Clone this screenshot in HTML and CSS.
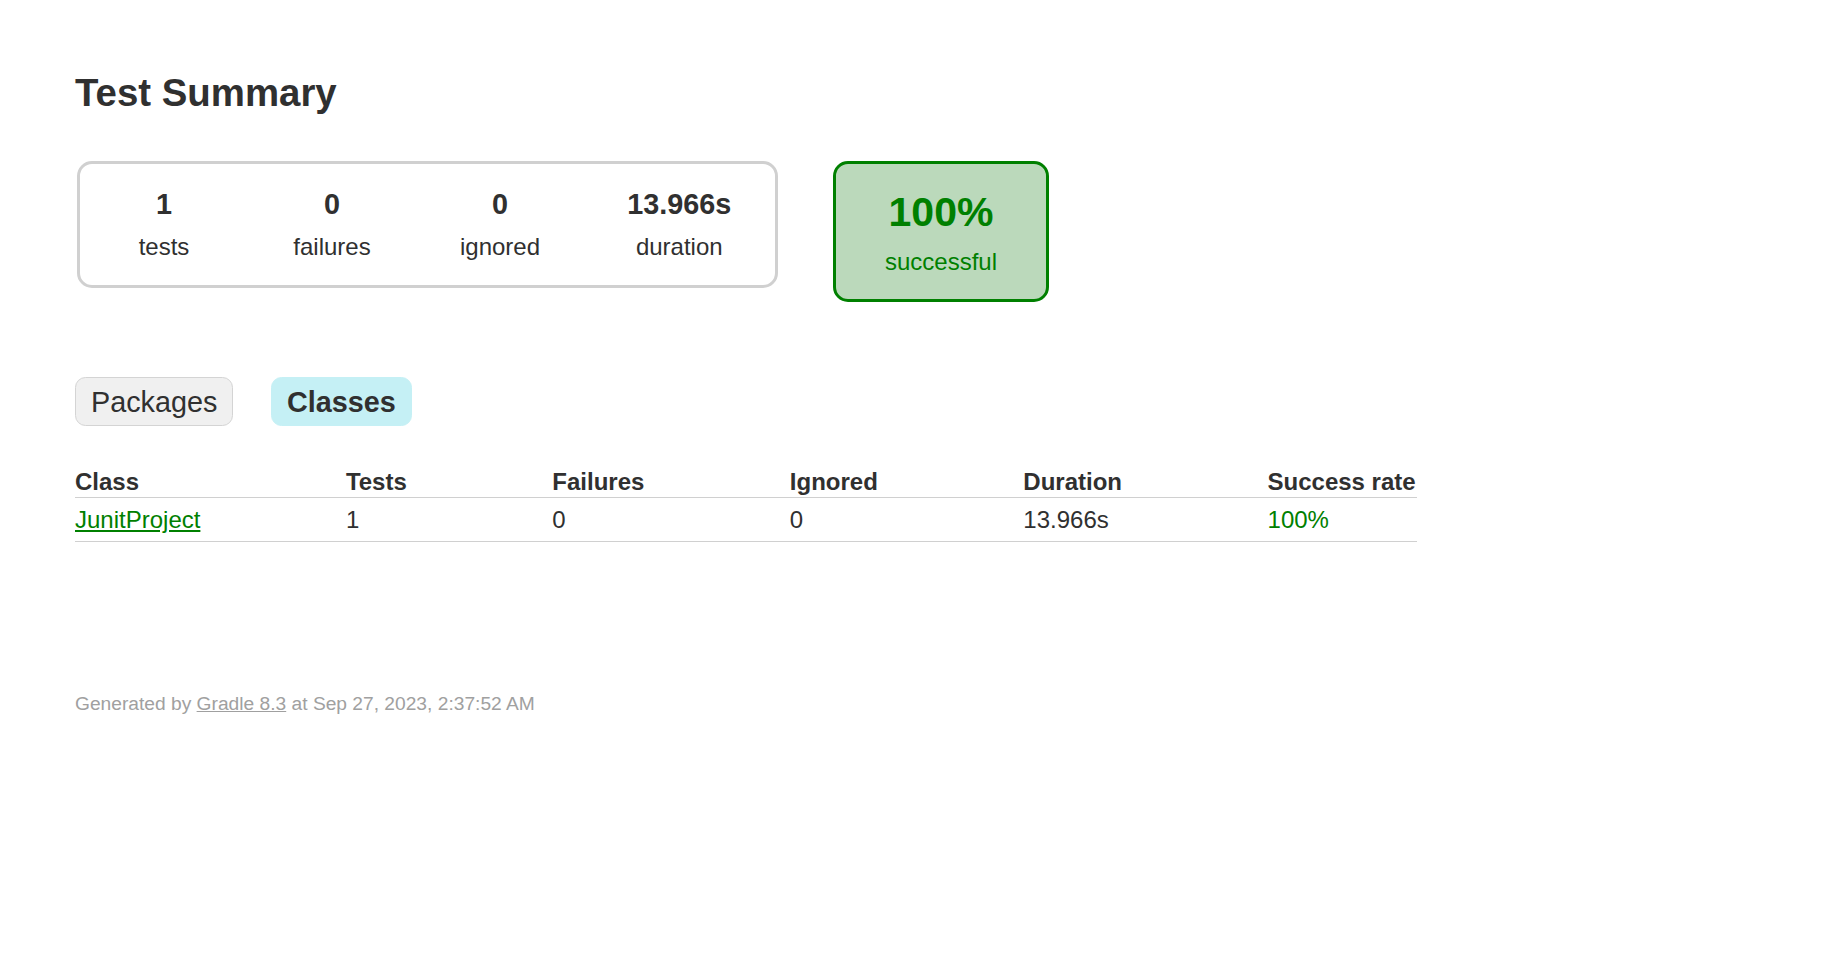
FILE: index.html
```html
<!DOCTYPE html>
<html lang="en">

<head>
    <meta charset="UTF-8">
    <meta name="viewport" content="width=device-width, initial-scale=1.0">
    <title>Test results - Test Summary</title>

    <link rel="stylesheet" href="styles.css">
</head>

<body>
    <div class="content">
        <h1>Test Summary</h1>

        <div class="summary">
            <div class="summaryGroup">
                <div class="infoBox">
                    <div class="counter">1</div>
                    <p>tests</p>
                </div>
                <div class="infoBox">
                    <div class="counter">0</div>
                    <p>failures</p>
                </div>
                <div class="infoBox">
                    <div class="counter">0</div>
                    <p>ignored</p>
                </div>
                <div class="infoBox duration">
                    <div class="counter">13.966s</div>
                    <p>duration</p>
                </div>
            </div>
            <div class="infoBox successRate">
                <div class="percent">100%</div>
                <p>successful</p>
            </div>
        </div>

        <div class="tabs">
            <ul class="tabLinks">
                <li><a href="#tab0">Packages</a></li>
                <li class="selected"><a href="#tab1">Classes</a></li>
            </ul>

            <div class="tab">
                <table>
                    <thead>
                        <tr>
                            <th>Class</th>
                            <th>Tests</th>
                            <th>Failures</th>
                            <th>Ignored</th>
                            <th>Duration</th>
                            <th>Success rate</th>
                        </tr>
                    </thead>
                    <tbody>
                        <tr>
                            <td class="success"><a href="#">JunitProject</a></td>
                            <td>1</td>
                            <td>0</td>
                            <td>0</td>
                            <td>13.966s</td>
                            <td class="success">100%</td>
                        </tr>
                    </tbody>
                </table>
            </div>
        </div>

        <div class="footer">
            Generated by <a href="#">Gradle 8.3</a> at Sep 27, 2023, 2:37:52 AM
        </div>
    </div>
</body>

</html>
```

FILE: styles.css
```css
body {
    margin: 0;
    padding: 0;
    font-family: "Liberation Sans", Arial, sans-serif;
    font-size: 24px;
    color: #303030;
    background-color: #ffffff;
}

a {
    color: #303030;
}

.content {
    padding: 45px 75px;
}

h1 {
    font-size: 38.4px;
    margin: 25.7px 0 0;
    white-space: nowrap;
}

/* summary boxes */
.summary {
    display: flex;
    align-items: flex-start;
    margin: 46.5px 0 0 2px;
}

.summaryGroup {
    display: flex;
    gap: 3px;
    padding: 1.5px;
    border: solid 3px #d0d0d0;
    border-radius: 15px;
}

.infoBox {
    width: 165px;
    padding: 22.5px 0;
    text-align: center;
}

.infoBox p {
    margin: 0;
}

.duration {
    width: 187.5px;
}

.counter,
.percent {
    font-size: 28.8px;
    font-weight: bold;
    margin-bottom: 12px;
}

.successRate {
    width: 210px;
    margin-left: 55.5px;
    padding-top: 25px;
    border: solid 3px #008000;
    border-radius: 15px;
    background-color: #bbd9bb;
    color: #008000;
}

.successRate .percent {
    font-size: 41px;
}

.success,
.success a {
    color: #008000;
}

/* tabs */
.tabLinks {
    display: flex;
    gap: 37.5px;
    list-style: none;
    margin: 60.5px 0 25px;
    padding: 15px 0;
}

.tabLinks li {
    padding: 7.5px 15px;
    border: solid 1.5px #d4d4d4;
    border-radius: 10.5px;
    background-color: #f0f0f0;
}

.tabLinks li.selected {
    background-color: #c5f0f5;
    border-color: #c5f0f5;
    font-weight: bold;
}

.tabLinks a {
    display: block;
    font-size: 28.8px;
    line-height: 32px;
    text-decoration: none;
}

/* classes table */
.tab table {
    border-collapse: collapse;
    border-bottom: solid 1px #d0d0d0;
}

.tab th {
    text-align: left;
    white-space: nowrap;
    padding: 1.5px 1.5px 1.5px 144px;
    border-bottom: solid 1px #d0d0d0;
}

.tab td {
    white-space: nowrap;
    padding: 7.5px 1.5px 7.5px 144px;
}

.tab th:first-child,
.tab td:first-child {
    padding-left: 0;
}

.footer {
    margin-top: 151px;
    font-size: 19.2px;
    white-space: nowrap;
    color: #a0a0a0;
}

.footer a {
    color: #a0a0a0;
}
```
